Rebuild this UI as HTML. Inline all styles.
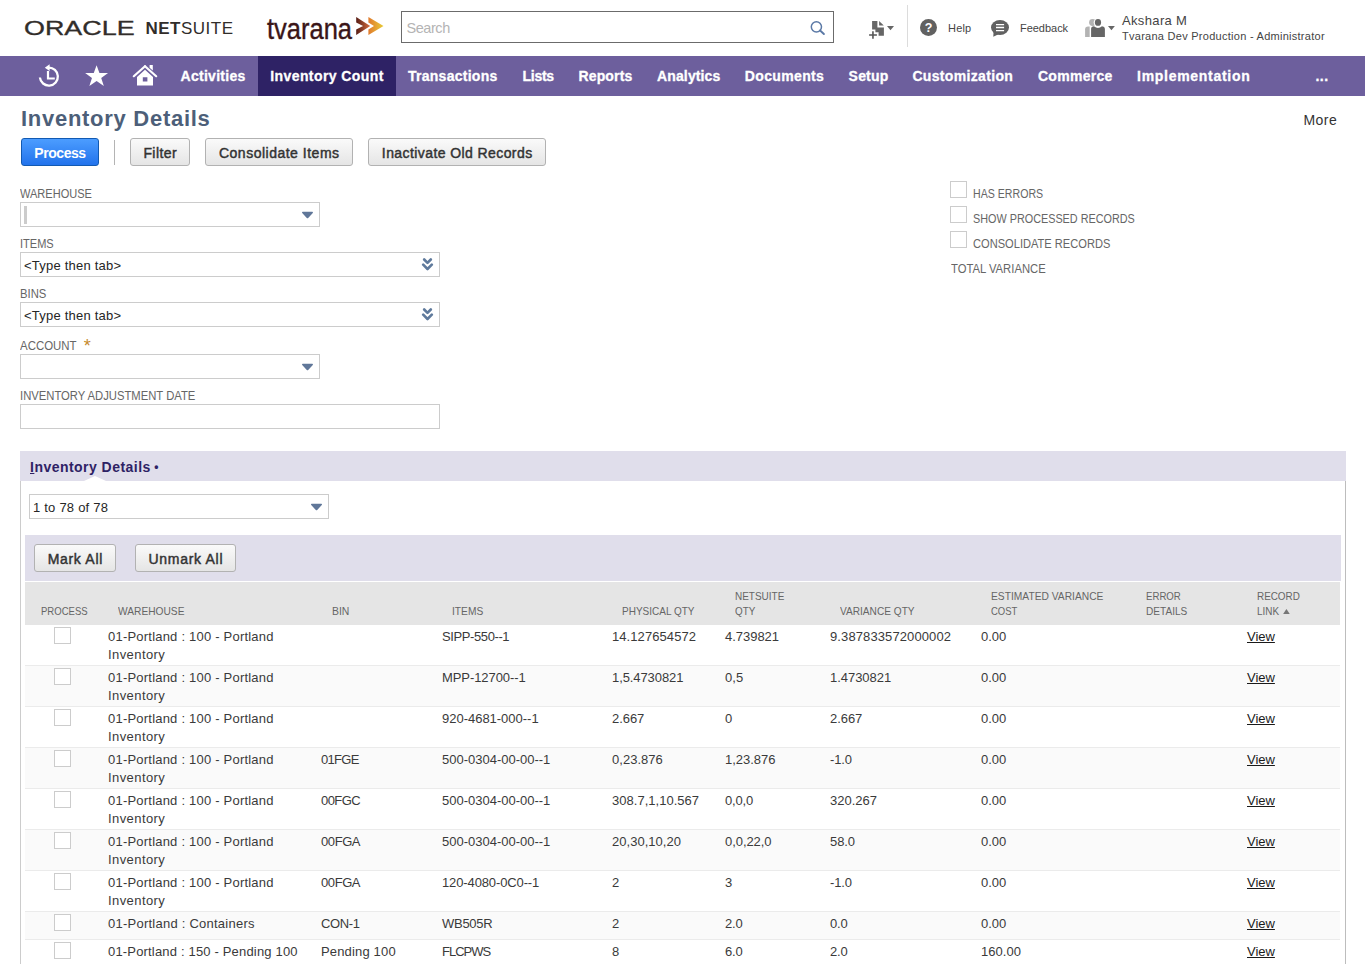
<!DOCTYPE html>
<html lang="en">
<head>
<meta charset="utf-8">
<title>Inventory Details - NetSuite (Tvarana Dev Production)</title>
<style>
*{box-sizing:border-box;margin:0;padding:0}
html,body{width:1365px;height:964px;overflow:hidden;background:#fff}
body{font-family:"Liberation Sans",sans-serif;font-size:13px;color:#333;position:relative}
.abs{position:absolute;white-space:nowrap}
/* header */
#hdr{position:absolute;left:0;top:0;width:1365px;height:56px;background:#fff}
#search{position:absolute;left:401px;top:11px;width:433px;height:32px;border:1px solid #6b6b6b;background:#fff}
#search span{position:absolute;left:4.500px;top:8px;font-size:14.500px;color:#b4b4b4;letter-spacing:-.45px}
/* nav */
#nav{position:absolute;left:0;top:56px;width:1365px;height:40px;background:#6d5f9d}
#nav .it{position:absolute;top:0;height:40px;line-height:41px;color:#fff;-webkit-text-stroke:.3px #fff;font-weight:bold;font-size:14px;text-align:center;white-space:nowrap}
#nav .act{background:#2e2265}
/* page */
h1{position:absolute;left:21px;top:105px;font-size:22px;line-height:28px;font-weight:bold;color:#4d5f79;white-space:nowrap;letter-spacing:.72px}
.btn{position:absolute;height:28px;border:1px solid #b2b2b2;border-radius:3px;background:linear-gradient(#fafafa,#e5e5e5);font-weight:normal;-webkit-text-stroke:.45px #333;font-size:14px;color:#333;text-align:center;line-height:28px;white-space:nowrap}
.btn.pri{border-color:#125ab2;background:linear-gradient(#4c9dff,#2273ec);color:#fff;font-weight:bold;-webkit-text-stroke:0}
.lbl{position:absolute;font-size:12px;line-height:14px;color:#666;white-space:nowrap;transform-origin:0 50%;transform:scaleX(.92)}
.fld{position:absolute;height:24px;border:1px solid #ccc;background:#fff;font-size:13px;line-height:23px;color:#262626;padding-left:3px;white-space:nowrap;letter-spacing:.22px}
.dd{position:absolute;width:0;height:0;border-left:6px solid transparent;border-right:6px solid transparent;border-top:6px solid #5b6d8c}
.cb{position:absolute;width:17px;height:17px;border:1px solid #ccc;background:#fff}

#sub{position:absolute;left:20px;top:451px;width:1326px;height:30px;background:#e0deeb}
#subwrap{position:absolute;left:20px;top:481px;width:1326px;height:483px;border-left:1px solid #ccc;border-right:1px solid #bdbdbd}
#bar{position:absolute;left:25px;top:535px;width:1316px;height:46px;background:#e0deeb}
#tbl{position:absolute;left:25px;top:582px;width:1316px}
#thead{position:absolute;left:0;top:0;width:1315px;height:43px;background:#e5e5e5}
.th{position:absolute;font-size:11px;line-height:16px;color:#666;white-space:nowrap;transform-origin:0 50%}
.row{position:absolute;left:0;width:1315px;border-bottom:1px solid #ebebeb;background:#fff}
.row.alt{background:#fafafa}
.row .c{position:absolute;top:3px;font-size:13px;line-height:18px;color:#3a3a3a;white-space:nowrap}
.row .cb{left:29px;top:2px}
.row a{color:#1a1a1a;text-decoration:underline}
</style>
</head>
<body>
<div id="hdr">
  <div class="abs" id="oracle" style="left:24px;top:17px;font-size:19.5px;line-height:22px;color:#312d2a;transform-origin:0 50%;transform:scaleX(1.38);-webkit-text-stroke:.3px #312d2a">ORACLE</div>
  <div class="abs" id="netsuite" style="left:145.500px;top:17.500px;font-size:17px;line-height:22px;color:#312d2a;letter-spacing:.5px"><b>NET</b>SUITE</div>
  <div class="abs" id="tvarana" style="left:267px;top:12px;font-size:30px;line-height:34px;color:#3a1517;transform-origin:0 50%;transform:scaleX(.85);-webkit-text-stroke:.4px #3a1517">tvarana</div>
  <svg class="abs" style="left:354px;top:15px" width="31" height="22" viewBox="354 15 31 22">
    <defs><linearGradient id="g1" x1="0" y1="0" x2="1" y2="0"><stop offset="0" stop-color="#561d16"/><stop offset="1" stop-color="#d86e3c"/></linearGradient><linearGradient id="g2" x1="0" y1="0" x2="1" y2="0"><stop offset="0" stop-color="#e07a2e"/><stop offset="1" stop-color="#e8cb35"/></linearGradient></defs>
    <polygon points="356.200,17.100 370.200,26 356.200,34.900 356.200,29.400 363.100,26 356.200,22.600" fill="url(#g1)"/>
    <polygon points="368.400,17.100 383.500,26 368.400,34.900 368.400,29.400 374,26 368.400,22.600" fill="url(#g2)"/>
  </svg>
  <div id="search"><span>Search</span>
    <svg class="abs" style="left:406px;top:7px" width="18" height="18" viewBox="0 0 18 18"><circle cx="8.400" cy="7.800" r="5.100" fill="none" stroke="#5b79a6" stroke-width="1.500"/><path d="M12.100 11.500 L15.900 15" stroke="#5b79a6" stroke-width="1.900" stroke-linecap="round"/></svg>
  </div>
  <svg class="abs" style="left:868px;top:20px" width="28" height="20" viewBox="0 0 28 20">
    <polygon points="4.100,1.100 9.400,1.100 9.400,7.400 15.900,7.400 15.900,15.700 10.600,15.700 10.600,12.200 7.400,12.200 7.400,9.400 4.100,9.400" fill="#666"/>
    <polygon points="11.100,1 11.100,5.600 15.800,5.600" fill="#666"/>
    <path d="M4.950 11.300 v7.400 M1.100 14.950 h7.800" stroke="#555" stroke-width="1.600"/>
    <polygon points="19,6.100 26,6.100 22.500,10.200" fill="#666"/>
  </svg>
  <div class="abs" style="left:907px;top:5px;width:1px;height:42px;background:#dcdcdc"></div>
  <svg class="abs" style="left:919px;top:18px" width="20" height="20" viewBox="0 0 20 20"><circle cx="9.500" cy="9.500" r="8.500" fill="#616161"/><text x="9.500" y="14" text-anchor="middle" font-family="Liberation Sans, sans-serif" font-weight="bold" font-size="12.500" fill="#fff">?</text></svg>
  <div class="abs" style="left:948px;top:20px;font-size:11px;line-height:16px;color:#444;letter-spacing:.2px">Help</div>
  <svg class="abs" style="left:990px;top:19px" width="20" height="19" viewBox="0 0 20 19"><ellipse cx="10" cy="8.500" rx="9" ry="7.400" fill="#616161"/><path d="M3.600 12 L3.300 17.800 L9 15 Z" fill="#616161"/><path d="M6 5.700 h8.100 M6 8.500 h8.100 M6 11.600 h8.100" stroke="#fff" stroke-width="1.300"/></svg>
  <div class="abs" style="left:1020px;top:20px;font-size:11px;line-height:16px;color:#444;letter-spacing:-.03px">Feedback</div>
  <svg class="abs" style="left:1084px;top:19px" width="32" height="19" viewBox="0 0 32 19">
    <ellipse cx="8.600" cy="3.500" rx="3.500" ry="3.400" fill="#b3b3b3"/><path d="M1.100 17.900 V10.200 Q1.100 7.600 4.200 7.600 H5.700 V17.900 Z" fill="#b3b3b3"/>
    <ellipse cx="14" cy="3.400" rx="4.300" ry="4.600" fill="#fff"/>
    <ellipse cx="14" cy="3.400" rx="3.100" ry="3.400" fill="#666"/>
    <path d="M7.100 17.900 V9.700 Q7.100 7.600 10 7.200 Q14 10.700 18 7.200 Q20.900 7.600 20.900 9.700 V17.900 Z" fill="#666"/>
    <polygon points="24,7.100 30.900,7.100 27.450,11.200" fill="#666"/>
  </svg>
  <div class="abs" style="left:1122px;top:13px;font-size:13px;line-height:16px;color:#444;letter-spacing:.35px">Akshara M</div>
  <div class="abs" id="role" style="left:1122px;top:29px;font-size:11px;line-height:14px;color:#444;letter-spacing:.27px">Tvarana Dev Production - Administrator</div>
</div>
<div id="nav">
  <svg class="abs" style="left:36px;top:7px" width="26" height="26" viewBox="0 0 26 26"><path d="M3.900 14.500 A9 9 0 1 0 12.500 4.600" fill="none" stroke="#fff" stroke-width="2.300"/><path d="M13.600 1.300 v6.800 l-4.800 -3.400 z" fill="#fff"/><path d="M12 8 v7.500 h6.800" fill="none" stroke="#fff" stroke-width="2.200"/></svg>
  <svg class="abs" style="left:84.400px;top:8.200px" width="25.200" height="23.100" viewBox="0 0 24 22"><polygon points="12,1.200 14.700,8.600 22.900,8.600 16.400,13.300 18.900,21 12,16.300 5.100,21 7.600,13.300 1.100,8.600 9.300,8.600" fill="#fff"/></svg>
  <svg class="abs" style="left:132px;top:7.400px" width="26" height="24" viewBox="0 0 26 24"><path d="M13 3.200 L1.800 13.200 M13 3.200 L24.200 13.200" stroke="#fff" stroke-width="2.200" fill="none" stroke-linecap="round"/><path d="M17.600 2 h3.200 v5.600 l-3.200 -2.900 z" fill="#fff"/><path d="M13 6.800 L21 13.900 V22.400 H5 V13.900 Z M10.800 14.200 v4.400 h4.600 v-4.400 z" fill="#fff" fill-rule="evenodd"/></svg>
  <div class="it" style="left:168.5px;width:89.1px"><span style="letter-spacing:0.28px">Activities</span></div>
  <div class="it act" style="left:258.0px;width:138.0px"><span style="letter-spacing:0.41px">Inventory Count</span></div>
  <div class="it" style="left:396.0px;width:113.5px"><span style="letter-spacing:0.26px">Transactions</span></div>
  <div class="it" style="left:510.5px;width:55.3px"><span style="letter-spacing:-0.28px">Lists</span></div>
  <div class="it" style="left:566.5px;width:77.9px"><span style="letter-spacing:0.13px">Reports</span></div>
  <div class="it" style="left:645.0px;width:87.5px"><span style="letter-spacing:0.13px">Analytics</span></div>
  <div class="it" style="left:732.8px;width:103.4px"><span style="letter-spacing:0.36px">Documents</span></div>
  <div class="it" style="left:836.6px;width:63.9px"><span style="letter-spacing:0.2px">Setup</span></div>
  <div class="it" style="left:900.4px;width:124.9px"><span style="letter-spacing:0.34px">Customization</span></div>
  <div class="it" style="left:1026.0px;width:98.6px"><span style="letter-spacing:0.28px">Commerce</span></div>
  <div class="it" style="left:1125.0px;width:137.5px"><span style="letter-spacing:0.71px">Implementation</span></div>
  <div class="it" style="left:1303px;width:38px;letter-spacing:.5px"><span>...</span></div>
</div>
<h1>Inventory Details</h1>
<div class="abs" id="more" style="left:1303.500px;top:111px;font-size:14px;line-height:18px;color:#333;letter-spacing:.45px">More</div>
<div class="btn pri" style="left:21px;top:138px;width:78px"><span style="letter-spacing:-.45px">Process</span></div>
<div class="abs" style="left:114px;top:140px;width:1px;height:25px;background:#b4b4b4"></div>
<div class="btn" style="left:130px;top:138px;width:60px"><span style="letter-spacing:0.413px;margin-right:-0.413px">Filter</span></div>
<div class="btn" style="left:205px;top:138px;width:148px"><span style="letter-spacing:0.502px;margin-right:-0.502px">Consolidate Items</span></div>
<div class="btn" style="left:368px;top:138px;width:178px"><span style="letter-spacing:0.412px;margin-right:-0.412px">Inactivate Old Records</span></div>

<div class="lbl" style="left:20px;top:187px;transform:scaleX(0.92)">WAREHOUSE</div>
<div class="fld" style="left:20px;top:202px;width:300px;height:25px"><i style="position:absolute;left:3px;top:3px;width:3px;height:18px;background:#ccc"></i><svg class="abs" style="left:280px;top:8px" width="13" height="8" viewBox="0 0 13 8"><path d="M1.600 .7 h9.800 q1 .3 .4 1.200 l-4.600 5 q-.7 .6 -1.400 0 l-4.600 -5 q-.6 -.9 .4 -1.200 z" fill="#607799"/></svg></div>
<div class="lbl" style="left:20px;top:237px;transform:scaleX(0.92)">ITEMS</div>
<div class="fld" style="left:20px;top:252px;width:420px;height:25px"><span style="position:relative;top:1px">&lt;Type then tab&gt;</span><svg class="abs" style="left:400px;top:5px" width="14" height="14" viewBox="0 0 14 14"><path d="M3.200 1.500 L6.500 4.800 L9.800 1.500 M2.200 6.700 L6.500 11 L10.800 6.700" fill="none" stroke="#5f7a9c" stroke-width="2.600" stroke-linecap="round" stroke-linejoin="round"/></svg></div>
<div class="lbl" style="left:20px;top:287px;transform:scaleX(0.94)">BINS</div>
<div class="fld" style="left:20px;top:302px;width:420px;height:25px"><span style="position:relative;top:1px">&lt;Type then tab&gt;</span><svg class="abs" style="left:400px;top:5px" width="14" height="14" viewBox="0 0 14 14"><path d="M3.200 1.500 L6.500 4.800 L9.800 1.500 M2.200 6.700 L6.500 11 L10.800 6.700" fill="none" stroke="#5f7a9c" stroke-width="2.600" stroke-linecap="round" stroke-linejoin="round"/></svg></div>
<div class="lbl" style="left:20px;top:339px;transform:scaleX(.953)">ACCOUNT <span style="color:#c68a2d;font-size:19px;line-height:10px;position:relative;top:1.500px;left:4.500px">*</span></div>
<div class="fld" style="left:20px;top:354px;width:300px;height:25px"><svg class="abs" style="left:280px;top:8px" width="13" height="8" viewBox="0 0 13 8"><path d="M1.600 .7 h9.800 q1 .3 .4 1.200 l-4.600 5 q-.7 .6 -1.400 0 l-4.600 -5 q-.6 -.9 .4 -1.200 z" fill="#607799"/></svg></div>
<div class="lbl" style="left:20px;top:389px;transform:scaleX(0.938)">INVENTORY ADJUSTMENT DATE</div>
<div class="fld" style="left:20px;top:404px;width:420px;height:25px"></div>

<div class="cb" style="left:950px;top:181px"></div>
<div class="lbl" style="left:973px;top:187px;transform:scaleX(0.884)">HAS ERRORS</div>
<div class="cb" style="left:950px;top:206px"></div>
<div class="lbl" style="left:973px;top:212px;transform:scaleX(0.902)">SHOW PROCESSED RECORDS</div>
<div class="cb" style="left:950px;top:231px"></div>
<div class="lbl" style="left:973px;top:237px;transform:scaleX(0.925)">CONSOLIDATE RECORDS</div>
<div class="lbl" style="left:951px;top:262px;transform:scaleX(0.938)">TOTAL VARIANCE</div>

<div id="sub"><div class="abs" id="subt" style="left:10px;top:7px;font-size:14px;line-height:18px;font-weight:bold;color:#2e2265;letter-spacing:.47px"><u>I</u>nventory Details <span style="font-size:12px;position:relative;top:-1px;left:-1px">&bull;</span></div>
<svg class="abs" style="left:64px;top:25px" width="22" height="5" viewBox="0 0 22 5"><polygon points="0,5 11,0 22,5" fill="#fff"/></svg></div>
<div id="subwrap"></div>
<div class="fld" id="pg" style="left:29px;top:494px;width:300px;height:25px"><span style="position:relative;top:1px">1 to 78 of 78</span><svg class="abs" style="left:280px;top:8px" width="13" height="8" viewBox="0 0 13 8"><path d="M1.600 .7 h9.800 q1 .3 .4 1.200 l-4.600 5 q-.7 .6 -1.400 0 l-4.600 -5 q-.6 -.9 .4 -1.200 z" fill="#607799"/></svg></div>
<div id="bar"></div>
<div class="btn" style="left:34px;top:544px;width:82px"><span style="letter-spacing:0.688px;margin-right:-0.688px">Mark All</span></div>
<div class="btn" style="left:135px;top:544px;width:101px"><span style="letter-spacing:0.711px;margin-right:-0.711px">Unmark All</span></div>
<div id="tbl">
<div id="thead">
  <div class="th" style="left:16px;top:21px;transform:scaleX(0.866)">PROCESS</div>
  <div class="th" style="left:93px;top:21px;transform:scaleX(0.927)">WAREHOUSE</div>
  <div class="th" style="left:306.5px;top:21px;transform:scaleX(0.949)">BIN</div>
  <div class="th" style="left:427px;top:21px;transform:scaleX(0.928)">ITEMS</div>
  <div class="th" style="left:597px;top:21px;transform:scaleX(0.91)">PHYSICAL QTY</div>
  <div class="th" style="left:710px;top:6px;transform:scaleX(0.906)">NETSUITE</div>
  <div class="th" style="left:710px;top:21px;transform:scaleX(0.897)">QTY</div>
  <div class="th" style="left:815px;top:21px;transform:scaleX(0.92)">VARIANCE QTY</div>
  <div class="th" style="left:966px;top:6px;transform:scaleX(0.932)">ESTIMATED VARIANCE</div>
  <div class="th" style="left:966px;top:21px;transform:scaleX(0.864)">COST</div>
  <div class="th" style="left:1121px;top:6px;transform:scaleX(0.876)">ERROR</div>
  <div class="th" style="left:1121px;top:21px;transform:scaleX(0.917)">DETAILS</div>
  <div class="th" style="left:1232px;top:6px;transform:scaleX(0.898)">RECORD</div>
  <div class="th" style="left:1232px;top:21px;transform:scaleX(.9)">LINK<svg style="position:absolute;left:29px;top:6px" width="8" height="5" viewBox="0 0 8 5"><polygon points="0,5 3.700,0 7.400,5" fill="#777"/></svg></div>
</div>
<div class="row" style="top:43px;height:41px"><div class="cb"></div><div class="c" style="left:83px;letter-spacing:0.214px">01-Portland : 100 - Portland<br><span style="letter-spacing:.42px">Inventory</span></div><div class="c" style="left:417px;letter-spacing:-0.395px">SIPP-550--1</div><div class="c" style="left:587px;letter-spacing:0.079px">14.127654572</div><div class="c" style="left:700px;letter-spacing:-0.029px">4.739821</div><div class="c" style="left:805px;letter-spacing:0.106px">9.387833572000002</div><div class="c" style="left:956px;letter-spacing:-0.003px">0.00</div><div class="c" style="left:1222px;letter-spacing:-0.013px"><a>View</a></div></div>
<div class="row alt" style="top:84px;height:41px"><div class="cb"></div><div class="c" style="left:83px;letter-spacing:0.214px">01-Portland : 100 - Portland<br><span style="letter-spacing:.42px">Inventory</span></div><div class="c" style="left:417px;letter-spacing:-0.079px">MPP-12700--1</div><div class="c" style="left:587px;letter-spacing:-0.091px">1,5.4730821</div><div class="c" style="left:700px;letter-spacing:0.141px">0,5</div><div class="c" style="left:805px;letter-spacing:-0.039px">1.4730821</div><div class="c" style="left:956px;letter-spacing:-0.003px">0.00</div><div class="c" style="left:1222px;letter-spacing:-0.013px"><a>View</a></div></div>
<div class="row" style="top:125px;height:41px"><div class="cb"></div><div class="c" style="left:83px;letter-spacing:0.214px">01-Portland : 100 - Portland<br><span style="letter-spacing:.42px">Inventory</span></div><div class="c" style="left:417px;letter-spacing:-0.017px">920-4681-000--1</div><div class="c" style="left:587px;letter-spacing:-0.049px">2.667</div><div class="c" style="left:700px">0</div><div class="c" style="left:805px;letter-spacing:-0.049px">2.667</div><div class="c" style="left:956px;letter-spacing:-0.003px">0.00</div><div class="c" style="left:1222px;letter-spacing:-0.013px"><a>View</a></div></div>
<div class="row alt" style="top:166px;height:41px"><div class="cb"></div><div class="c" style="left:83px;letter-spacing:0.214px">01-Portland : 100 - Portland<br><span style="letter-spacing:.42px">Inventory</span></div><div class="c" style="left:296px;letter-spacing:-0.717px">01FGE</div><div class="c" style="left:417px;letter-spacing:-0.006px">500-0304-00-00--1</div><div class="c" style="left:587px;letter-spacing:0.024px">0,23.876</div><div class="c" style="left:700px;letter-spacing:-0.014px">1,23.876</div><div class="c" style="left:805px;letter-spacing:-0.152px">-1.0</div><div class="c" style="left:956px;letter-spacing:-0.003px">0.00</div><div class="c" style="left:1222px;letter-spacing:-0.013px"><a>View</a></div></div>
<div class="row" style="top:207px;height:41px"><div class="cb"></div><div class="c" style="left:83px;letter-spacing:0.214px">01-Portland : 100 - Portland<br><span style="letter-spacing:.42px">Inventory</span></div><div class="c" style="left:296px;letter-spacing:-0.561px">00FGC</div><div class="c" style="left:417px;letter-spacing:-0.006px">500-0304-00-00--1</div><div class="c" style="left:587px;letter-spacing:0.025px">308.7,1,10.567</div><div class="c" style="left:700px;letter-spacing:-0.184px">0,0,0</div><div class="c" style="left:805px;letter-spacing:0.0px">320.267</div><div class="c" style="left:956px;letter-spacing:-0.003px">0.00</div><div class="c" style="left:1222px;letter-spacing:-0.013px"><a>View</a></div></div>
<div class="row alt" style="top:248px;height:41px"><div class="cb"></div><div class="c" style="left:83px;letter-spacing:0.214px">01-Portland : 100 - Portland<br><span style="letter-spacing:.42px">Inventory</span></div><div class="c" style="left:296px;letter-spacing:-0.417px">00FGA</div><div class="c" style="left:417px;letter-spacing:-0.006px">500-0304-00-00--1</div><div class="c" style="left:587px;letter-spacing:0.019px">20,30,10,20</div><div class="c" style="left:700px;letter-spacing:-0.062px">0,0,22,0</div><div class="c" style="left:805px;letter-spacing:-0.103px">58.0</div><div class="c" style="left:956px;letter-spacing:-0.003px">0.00</div><div class="c" style="left:1222px;letter-spacing:-0.013px"><a>View</a></div></div>
<div class="row" style="top:289px;height:41px"><div class="cb"></div><div class="c" style="left:83px;letter-spacing:0.214px">01-Portland : 100 - Portland<br><span style="letter-spacing:.42px">Inventory</span></div><div class="c" style="left:296px;letter-spacing:-0.417px">00FGA</div><div class="c" style="left:417px;letter-spacing:-0.121px">120-4080-0C0--1</div><div class="c" style="left:587px">2</div><div class="c" style="left:700px">3</div><div class="c" style="left:805px;letter-spacing:-0.152px">-1.0</div><div class="c" style="left:956px;letter-spacing:-0.003px">0.00</div><div class="c" style="left:1222px;letter-spacing:-0.013px"><a>View</a></div></div>
<div class="row alt" style="top:330px;height:28px"><div class="cb"></div><div class="c" style="left:83px;letter-spacing:0.241px">01-Portland : Containers</div><div class="c" style="left:296px;letter-spacing:-0.391px">CON-1</div><div class="c" style="left:417px;letter-spacing:-0.272px">WB505R</div><div class="c" style="left:587px">2</div><div class="c" style="left:700px;letter-spacing:-0.159px">2.0</div><div class="c" style="left:805px;letter-spacing:-0.193px">0.0</div><div class="c" style="left:956px;letter-spacing:-0.003px">0.00</div><div class="c" style="left:1222px;letter-spacing:-0.013px"><a>View</a></div></div>
<div class="row" style="top:358px;height:28px"><div class="cb"></div><div class="c" style="left:83px;letter-spacing:0.174px">01-Portland : 150 - Pending 100</div><div class="c" style="left:296px;letter-spacing:0.162px">Pending 100</div><div class="c" style="left:417px;letter-spacing:-0.979px">FLCPWS</div><div class="c" style="left:587px">8</div><div class="c" style="left:700px;letter-spacing:-0.159px">6.0</div><div class="c" style="left:805px;letter-spacing:-0.159px">2.0</div><div class="c" style="left:956px;letter-spacing:0.039px">160.00</div><div class="c" style="left:1222px;letter-spacing:-0.013px"><a>View</a></div></div>
</div>
</body>
</html>
